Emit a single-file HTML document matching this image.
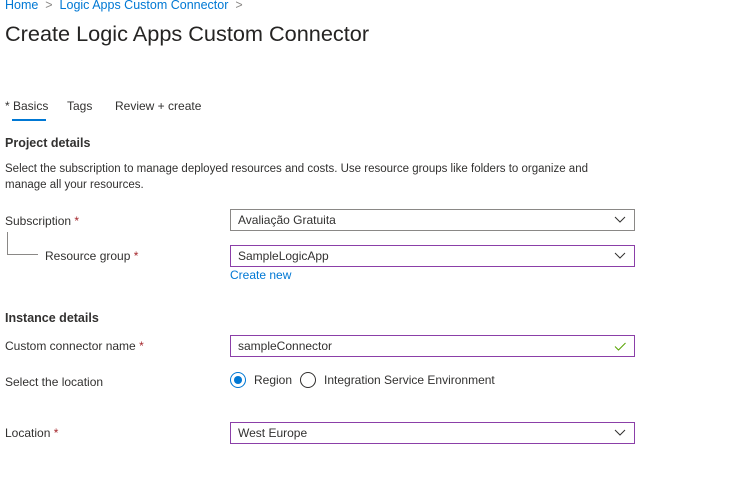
<!DOCTYPE html>
<html><head><style>
body{margin:0;width:738px;height:477px;background:#fff;font-family:"Segoe UI","Liberation Sans",sans-serif;color:#323130;position:relative;overflow:hidden}
.a{position:absolute;white-space:nowrap}
.l{font-size:12px}
.r{color:#a4262c}
.in{position:absolute;left:230px;border:1px solid #8b3fa8;font-size:12px;line-height:20px;padding-left:7px;box-sizing:border-box;width:405px;height:22px}
.ch{position:absolute;right:8px;top:6px}
</style></head><body>
<div class="a" style="left:5px;top:-2px;font-size:12.5px;color:#0078d4">Home <span style="color:#8a8886">&nbsp;&gt;&nbsp;</span> Logic Apps Custom Connector <span style="color:#8a8886">&nbsp;&gt;</span></div>
<div class="a" style="left:5px;top:21px;font-size:21.7px;color:#252423">Create Logic Apps Custom Connector</div>
<div class="a l" style="left:5px;top:99px;font-size:12px">* Basics</div>
<div class="a" style="left:12px;top:119px;width:34px;height:2px;background:#0078d4"></div>
<div class="a l" style="left:67px;top:99px;font-size:12px">Tags</div>
<div class="a l" style="left:115px;top:99px;font-size:12px">Review + create</div>
<div class="a" style="left:5px;top:136px;font-size:12.5px;font-weight:bold">Project details</div>
<div class="a l" style="left:5px;top:161px;line-height:16px;font-size:11.5px">Select the subscription to manage deployed resources and costs. Use resource groups like folders to organize and<br>manage all your resources.</div>
<div class="a l" style="left:5px;top:214px">Subscription <span class="r">*</span></div>
<div class="a" style="left:7px;top:232px;width:30px;height:22px;border-left:1px solid #8a8886;border-bottom:1px solid #8a8886"></div>
<div class="a l" style="left:45px;top:249px">Resource group <span class="r">*</span></div>
<div class="in" style="top:209px;border-color:#8a8886">Avaliação Gratuita<svg class="ch" width="12" height="8"><path d="M1 1l5 5 5-5" fill="none" stroke="#323130"/></svg></div>
<div class="in" style="top:245px">SampleLogicApp<svg class="ch" width="12" height="8"><path d="M1 1l5 5 5-5" fill="none" stroke="#323130"/></svg></div>
<div class="a l" style="left:230px;top:268px;color:#0078d4">Create new</div>
<div class="a" style="left:5px;top:311px;font-size:12.5px;font-weight:bold">Instance details</div>
<div class="a l" style="left:5px;top:339px">Custom connector name <span class="r">*</span></div>
<div class="in" style="top:335px">sampleConnector<svg class="ch" width="12" height="9"><path d="M1 4.5l3.5 3.5 7-7" fill="none" stroke="#57a300"/></svg></div>
<div class="a l" style="left:5px;top:375px">Select the location</div>
<svg class="a" style="left:229px;top:371px" width="18" height="18"><circle cx="9" cy="9" r="7.5" fill="none" stroke="#0078d4"/><circle cx="9" cy="9" r="4" fill="#0078d4"/></svg>
<div class="a l" style="left:254px;top:373px">Region</div>
<svg class="a" style="left:299px;top:371px" width="18" height="18"><circle cx="9" cy="9" r="7.5" fill="none" stroke="#323130"/></svg>
<div class="a l" style="left:324px;top:373px">Integration Service Environment</div>
<div class="a l" style="left:5px;top:426px">Location <span class="r">*</span></div>
<div class="in" style="top:422px">West Europe<svg class="ch" width="12" height="8"><path d="M1 1l5 5 5-5" fill="none" stroke="#323130"/></svg></div>
</body></html>
